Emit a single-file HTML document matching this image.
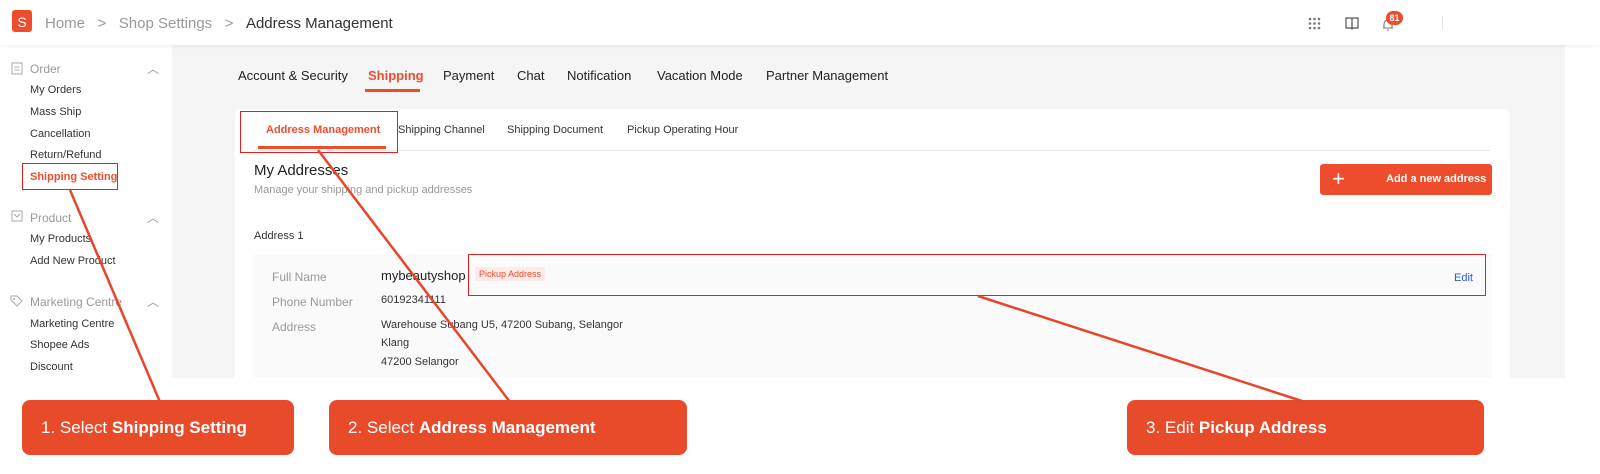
<!DOCTYPE html>
<html><head><style>
*{margin:0;padding:0;box-sizing:border-box}
body{width:1600px;height:474px;overflow:hidden;background:#fff;font-family:"Liberation Sans",Arial,sans-serif;position:relative}
.a{position:absolute;white-space:nowrap}
.hdr{left:0;top:0;width:1600px;height:45px;background:#fff;box-shadow:0 1px 4px rgba(0,0,0,.08);z-index:2}
.side{left:0;top:45px;width:172px;height:333px;background:#fff}
.gray{left:172px;top:45px;width:1393px;height:333px;background:#f5f5f5}
.card{left:235px;top:109px;width:1275px;height:269px;background:#fff;border-radius:5px 5px 0 0}
.s{font-size:11px;color:#333}
.sh{font-size:12px;color:#999}
.call{background:#e84b2a;border-radius:8px;height:55px;color:#fff;font-size:17px;padding:18px 0 0 19px}
</style></head><body>
<div class="a hdr">
 <div class="a" style="left:12px;top:10px;width:20px;height:22px;background:#ee4d2d;border-radius:3px;color:#fff;font-size:14px;text-align:center;line-height:24px">S</div>
 <div class="a" style="left:45px;top:15px;font-size:15px;color:#999">Home&nbsp;&nbsp;&nbsp;&gt;&nbsp;&nbsp;&nbsp;Shop Settings&nbsp;&nbsp;&nbsp;&gt;&nbsp;&nbsp;&nbsp;<span style="color:#333">Address Management</span></div>
 <svg class="a" style="left:1308px;top:17px" width="13" height="13"><g fill="#777"><circle cx="2" cy="2" r="1.3"/><circle cx="6.5" cy="2" r="1.3"/><circle cx="11" cy="2" r="1.3"/><circle cx="2" cy="6.5" r="1.3"/><circle cx="6.5" cy="6.5" r="1.3"/><circle cx="11" cy="6.5" r="1.3"/><circle cx="2" cy="11" r="1.3"/><circle cx="6.5" cy="11" r="1.3"/><circle cx="11" cy="11" r="1.3"/></g></svg>
 <svg class="a" style="left:1345px;top:17px" width="14" height="13"><path d="M1 1h5l1 1 1-1h5v10H8l-1 1-1-1H1z M7 2v9" fill="none" stroke="#555" stroke-width="1.2"/></svg>
 <svg class="a" style="left:1382px;top:18px" width="12" height="13"><path d="M2 10V6a4 4 0 018 0v4h1H1z M5 12h2" fill="none" stroke="#777" stroke-width="1.1"/></svg>
 <div class="a" style="left:1386px;top:11px;width:17px;height:14px;border-radius:7px;background:#ee4d2d;color:#fff;font-size:9px;font-weight:bold;text-align:center;line-height:14px">81</div>
 <div class="a" style="left:1442px;top:16px;width:1px;height:14px;background:#e5e5e5"></div>
</div>
<div class="a side">
 <svg class="a" style="left:11px;top:17px" width="12" height="13"><rect x="1" y="1" width="10" height="11" fill="none" stroke="#aaa"/><path d="M3.5 5h5M3.5 8h5" stroke="#aaa"/></svg>
 <div class="a sh" style="left:30px;top:17px">Order</div><div class="a sh" style="left:147px;top:15px">︿</div>
 <div class="a s" style="left:30px;top:39px">My Orders</div>
 <div class="a s" style="left:30px;top:61px">Mass Ship</div>
 <div class="a s" style="left:30px;top:83px">Cancellation</div>
 <div class="a s" style="left:30px;top:104px">Return/Refund</div>
 <div class="a" style="left:22px;top:118px;width:96px;height:27px;border:1.5px solid #e02020"></div>
 <div class="a s" style="left:30px;top:126px;color:#ee4d2d;font-weight:bold">Shipping Setting</div>
 <svg class="a" style="left:11px;top:165px" width="12" height="12"><rect x="1" y="1" width="10" height="10" fill="none" stroke="#aaa"/><path d="M3 4l3 3 3-3" fill="none" stroke="#aaa"/></svg>
 <div class="a sh" style="left:30px;top:166px">Product</div><div class="a sh" style="left:147px;top:164px">︿</div>
 <div class="a s" style="left:30px;top:188px">My Products</div>
 <div class="a s" style="left:30px;top:210px">Add New Product</div>
 <svg class="a" style="left:10px;top:250px" width="13" height="13"><path d="M1 1h6l5 5-5 5-6-6z" fill="none" stroke="#aaa"/><circle cx="4" cy="4" r="1" fill="#aaa"/></svg>
 <div class="a sh" style="left:30px;top:250px">Marketing Centre</div><div class="a sh" style="left:147px;top:248px">︿</div>
 <div class="a s" style="left:30px;top:273px">Marketing Centre</div>
 <div class="a s" style="left:30px;top:294px">Shopee Ads</div>
 <div class="a s" style="left:30px;top:316px">Discount</div>
</div>
<div class="a gray"></div>
<div class="a" style="left:238px;top:68px;font-size:13px;color:#222">Account &amp; Security</div>
<div class="a" style="left:368px;top:68px;font-size:13px;color:#ee4d2d;font-weight:bold">Shipping</div>
<div class="a" style="left:365px;top:89px;width:55px;height:3px;background:#ee4d2d"></div>
<div class="a" style="left:443px;top:68px;font-size:13px;color:#222">Payment</div>
<div class="a" style="left:517px;top:68px;font-size:13px;color:#222">Chat</div>
<div class="a" style="left:567px;top:68px;font-size:13px;color:#222">Notification</div>
<div class="a" style="left:657px;top:68px;font-size:13px;color:#222">Vacation Mode</div>
<div class="a" style="left:766px;top:68px;font-size:13px;color:#222">Partner Management</div>
<div class="a card">
 <div class="a" style="left:18px;top:41px;width:1238px;height:1px;background:#e8e8e8"></div>
 <div class="a" style="left:23px;top:37px;width:128px;height:3px;background:#ee4d2d"></div>
 <div class="a" style="left:31px;top:15px;font-size:11px;color:#ee4d2d;font-weight:bold">Address Management</div>
 <div class="a" style="left:5px;top:2px;width:158px;height:42px;border:1.5px solid #e02020"></div>
 <div class="a s" style="left:163px;top:15px">Shipping Channel</div>
 <div class="a s" style="left:272px;top:15px">Shipping Document</div>
 <div class="a s" style="left:392px;top:15px">Pickup Operating Hour</div>
 <div class="a" style="left:19px;top:53px;font-size:15px;color:#222">My Addresses</div>
 <div class="a" style="left:19px;top:75px;font-size:11px;color:#999">Manage your shipping and pickup addresses</div>
 <div class="a" style="left:1085px;top:55px;width:172px;height:31px;background:#ee4d2d;border-radius:3px;color:#fff;font-size:11px;font-weight:bold;padding:9px 0 0 66px">Add a new address</div>
 <div class="a" style="left:1097px;top:55px;color:#fff;font-size:22px;line-height:29px;font-weight:300">+</div>
 <div class="a s" style="left:19px;top:121px">Address 1</div>
 <div class="a" style="left:19px;top:145px;width:1238px;height:124px;background:#fafafa"></div>
 <div class="a sh" style="left:37px;top:161px">Full Name</div>
 <div class="a sh" style="left:37px;top:186px">Phone Number</div>
 <div class="a sh" style="left:37px;top:211px">Address</div>
 <div class="a" style="left:146px;top:159px;font-size:13px;color:#222">mybeautyshop</div>
 <div class="a" style="left:240px;top:158px;background:#fdebea;color:#ee4d2d;font-size:9px;padding:2px 4px">Pickup Address</div>
 <div class="a" style="left:233px;top:145px;width:1018px;height:42px;border:1.5px solid #e02020"></div>
 <div class="a" style="left:1219px;top:163px;font-size:11px;color:#2a5fc9">Edit</div>
 <div class="a s" style="left:146px;top:185px">60192341111</div>
 <div class="a s" style="left:146px;top:210px">Warehouse Subang U5, 47200 Subang, Selangor</div>
 <div class="a s" style="left:146px;top:228px">Klang</div>
 <div class="a s" style="left:146px;top:247px">47200 Selangor</div>
</div>
<svg class="a" style="left:0;top:0;z-index:3" width="1600" height="474"><g stroke="#e8462a" stroke-width="2.5"><line x1="70" y1="190" x2="160" y2="402"/><line x1="318" y1="150" x2="510" y2="402"/><line x1="978" y1="296" x2="1305" y2="402"/></g></svg>
<div class="a call" style="left:22px;top:400px;width:272px">1. Select <b>Shipping Setting</b></div>
<div class="a call" style="left:329px;top:400px;width:358px">2. Select <b>Address Management</b></div>
<div class="a call" style="left:1127px;top:400px;width:357px">3. Edit <b>Pickup Address</b></div>
</body></html>
